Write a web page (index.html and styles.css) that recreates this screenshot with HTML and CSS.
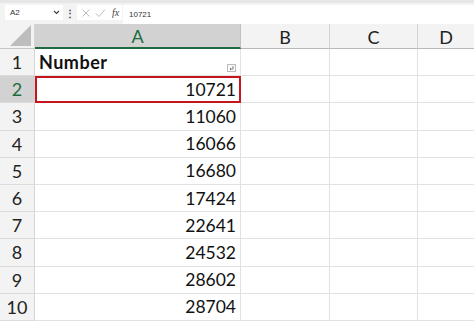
FILE: index.html
```html
<!DOCTYPE html>
<html>
<head>
<meta charset="utf-8">
<link rel="stylesheet" href="styles.css">
</head>
<body>
<div class="app">
  <div class="toolbar">
    <div class="namebox"><span>A2</span>
      <svg class="chev" width="7" height="5" viewBox="0 0 7 5"><path d="M1 1 L3.5 3.5 L6 1" fill="none" stroke="#444" stroke-width="1.2"/></svg>
    </div>
    <div class="dots">⋮</div>
    <div class="funcs">
      <svg width="10" height="10" viewBox="0 0 10 10"><path d="M1.5 1.5 L8.5 8.5 M8.5 1.5 L1.5 8.5" stroke="#bbb" stroke-width="1"/></svg>
      <svg width="11" height="10" viewBox="0 0 11 10"><path d="M1 5.5 L4 8.5 L10 1.5" fill="none" stroke="#bbb" stroke-width="1"/></svg>
      <span class="fx">fx</span>
    </div>
    <div class="formula">10721</div>
  </div>
  <div class="sheet">
    <div class="corner"><svg width="22" height="21" viewBox="0 0 22 21"><path d="M21 0 L21 21 L0 21 Z" fill="#bdbdbd"/></svg></div>
    <div class="ch sel">A</div>
    <div class="ch">B</div>
    <div class="ch">C</div>
    <div class="ch last">D</div>

    <div class="rh">1</div><div class="c head">Number<span class="qa"><svg width="7" height="6" viewBox="0 0 7 6"><path d="M5 1 V4 H2 M3 3 L2 4 L3 5" fill="none" stroke="#666" stroke-width="0.8"/></svg></span></div><div class="c"></div><div class="c"></div><div class="c last"></div>
    <div class="rh selr">2</div><div class="c num active">10721</div><div class="c"></div><div class="c"></div><div class="c last"></div>
    <div class="rh">3</div><div class="c num">11060</div><div class="c"></div><div class="c"></div><div class="c last"></div>
    <div class="rh">4</div><div class="c num">16066</div><div class="c"></div><div class="c"></div><div class="c last"></div>
    <div class="rh">5</div><div class="c num">16680</div><div class="c"></div><div class="c"></div><div class="c last"></div>
    <div class="rh">6</div><div class="c num">17424</div><div class="c"></div><div class="c"></div><div class="c last"></div>
    <div class="rh">7</div><div class="c num">22641</div><div class="c"></div><div class="c"></div><div class="c last"></div>
    <div class="rh">8</div><div class="c num">24532</div><div class="c"></div><div class="c"></div><div class="c last"></div>
    <div class="rh">9</div><div class="c num">28602</div><div class="c"></div><div class="c"></div><div class="c last"></div>
    <div class="rh">10</div><div class="c num">28704</div><div class="c"></div><div class="c"></div><div class="c last"></div>
  </div>
</div>
</body>
</html>
```

FILE: styles.css
```css
html, body {
  margin: 0;
  padding: 0;
  background: #ffffff;
}
.app {
  width: 474px;
  height: 322px;
  overflow: hidden;
  font-family: Lato, "Liberation Sans", sans-serif;
  color: #1a1a1a;
}
.toolbar {
  height: 24px;
  box-sizing: border-box;
  background: #f3f3f3;
  border-top: 3px solid #e6e6e6;
  display: flex;
  align-items: center;
  padding: 0 0 2px 5px;
}
.namebox {
  width: 58px;
  height: 15px;
  background: #fff;
  display: flex;
  align-items: center;
  justify-content: space-between;
  padding: 0 3px 0 5px;
  box-sizing: border-box;
  font-family: "Liberation Sans", sans-serif;
  font-size: 8px;
  color: #333;
}
.dots {
  width: 14px;
  text-align: center;
  font-size: 10px;
  color: #444;
  font-weight: bold;
}
.funcs {
  width: 45px;
  height: 15px;
  background: #fff;
  display: flex;
  align-items: center;
  gap: 4px;
  padding-left: 4px;
  box-sizing: border-box;
}
.fx {
  font-family: "Liberation Serif", serif;
  font-style: italic;
  font-size: 10px;
  color: #444;
  margin-left: 2px;
}
.formula {
  flex: 1;
  height: 19px;
  margin-left: 1px;
  background: #fff;
  display: flex;
  align-items: center;
  padding-left: 6px;
  font-family: "Liberation Sans", sans-serif;
  font-size: 8px;
  color: #333;
  align-self: flex-end;
  margin-bottom: -2px;
}
.sheet {
  display: grid;
  grid-template-columns: 35px 206px 89px 88px 56px;
  grid-template-rows: 25px repeat(10, 27.2px);
}
.corner {
  background: #f3f3f3;
  border-right: 1px solid #d4d4d4;
  border-bottom: 1px solid #c6c6c6;
  display: flex;
  align-items: flex-end;
  justify-content: flex-end;
  padding: 0 2px 2px 0;
}
.ch {
  background: #f3f3f3;
  border-right: 1px solid #d4d4d4;
  border-bottom: 1px solid #b8b8b8;
  display: flex;
  align-items: center;
  justify-content: center;
  font-size: 18px;
  color: #222;
  padding-top: 1px;
}
.ch.sel {
  background: #d2d2d2;
  color: #1e6b41;
  border-bottom: 2px solid #1e6b41;
  border-right-color: #c0c0c0;
}
.ch.last, .c.last {
  border-right: none;
}
.rh {
  background: #f3f3f3;
  border-right: 1px solid #d4d4d4;
  border-bottom: 1px solid #dcdcdc;
  display: flex;
  align-items: center;
  justify-content: center;
  font-size: 18px;
  color: #222;
}
.rh.selr {
  background: #d2d2d2;
  color: #1e6b41;
}
.c {
  position: relative;
  border-right: 1px solid #e2e2e2;
  border-bottom: 1px solid #e2e2e2;
  display: flex;
  align-items: center;
  font-size: 17.5px;
  color: #111;
  padding: 0 4px;
}
.c.head {
  font-weight: bold;
  font-size: 18px;
  letter-spacing: 0.5px;
}
.c.num {
  justify-content: flex-end;
}
.c.active {
  outline: 2.5px solid #c5161d;
  outline-offset: -2px;
  z-index: 1;
}
.qa {
  position: absolute;
  right: 4px;
  bottom: 3px;
  width: 7px;
  height: 6px;
  border: 1px solid #bcbcbc;
  background: #fafafa;
  display: flex;
}
```
